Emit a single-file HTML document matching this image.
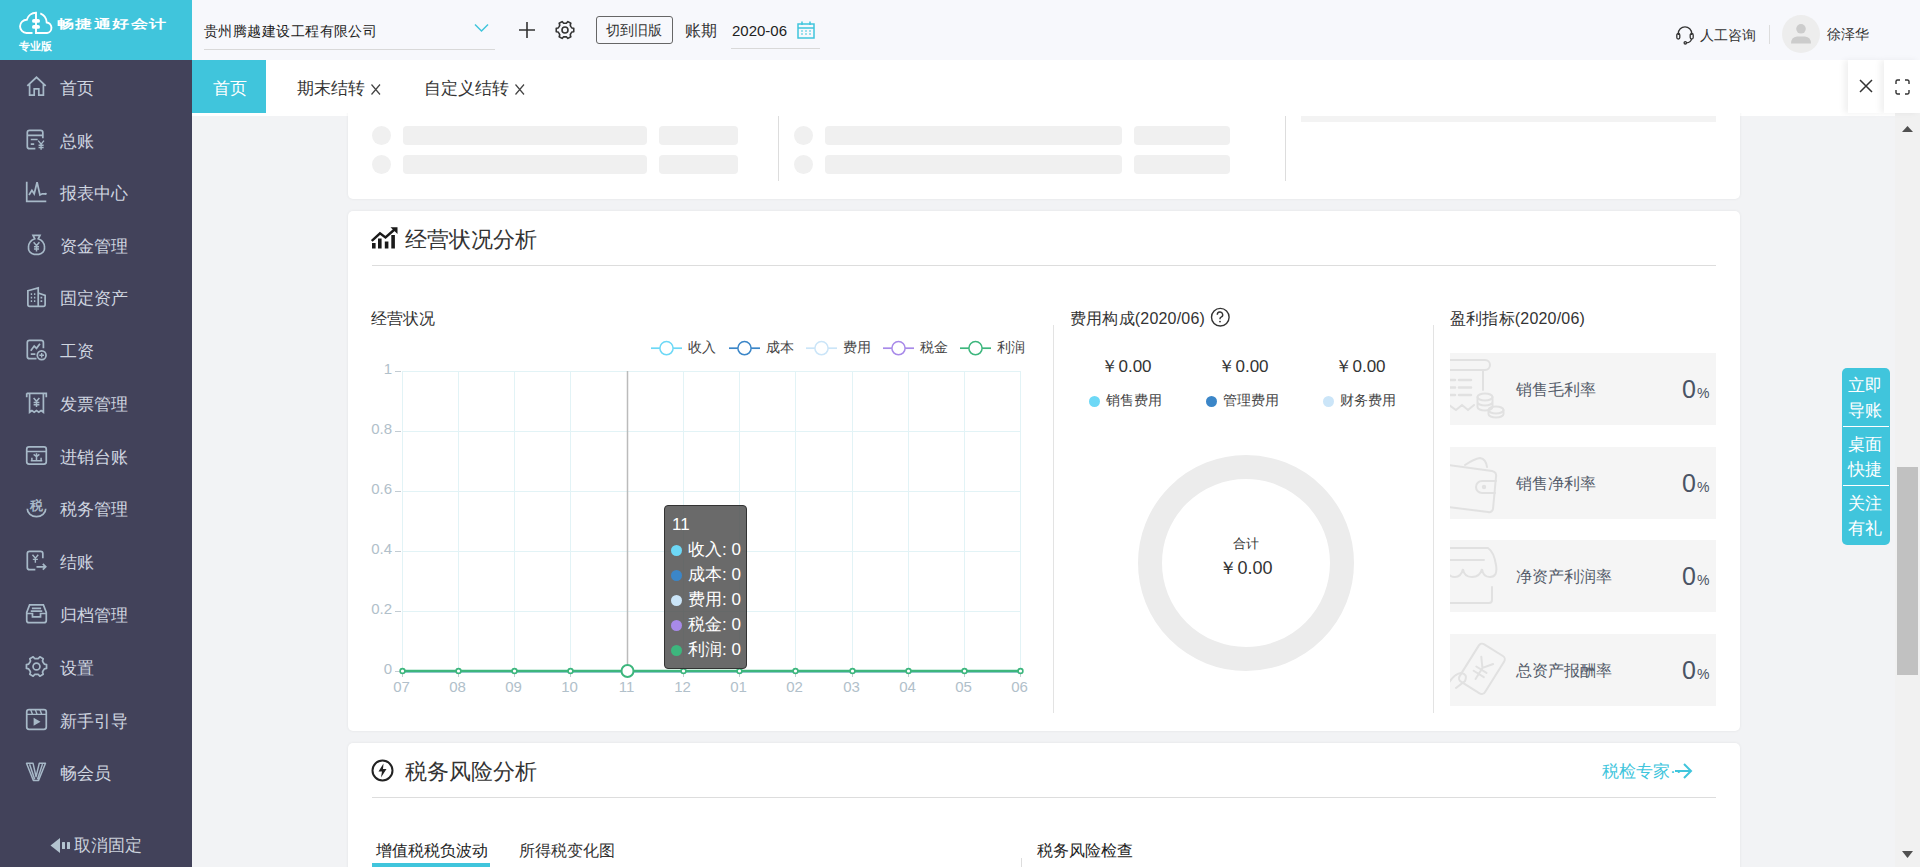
<!DOCTYPE html>
<html><head><meta charset="utf-8">
<style>
*{box-sizing:border-box;margin:0;padding:0}
html,body{width:1920px;height:867px;overflow:hidden;font-family:"Liberation Sans",sans-serif;background:#f2f3f5;color:#333}
.abs{position:absolute}
.t{position:absolute;white-space:nowrap;line-height:1}
#side{position:absolute;left:0;top:0;width:192px;height:867px;background:#42425a;z-index:5}
#logo{position:absolute;left:0;top:0;width:192px;height:60px;background:#40c5dc}
#hdr{position:absolute;left:192px;top:0;width:1728px;height:60px;background:#f7f8fc;z-index:5}
#tabs{position:absolute;left:192px;top:60px;width:1728px;height:53px;background:#fff;z-index:5}
#main{position:absolute;left:0;top:0;width:1920px;height:867px;overflow:hidden}
.menu{position:absolute;left:0;width:192px;height:52px}
.menu .tx{position:absolute;left:60px;top:19px;line-height:1;font-size:17px;color:#d0d6e0;white-space:nowrap}
.menu svg{position:absolute;left:25px;top:14px;width:23px;height:23px}
.card{position:absolute;left:156px;width:1392px;background:#fff;border-radius:5px;box-shadow:0 0 3px rgba(0,0,0,.07)}
.sk{position:absolute;background:#f0f0f0;border-radius:4px;height:19px}
.skc{position:absolute;background:#f0f0f0;border-radius:50%;width:19px;height:19px}
</style></head><body>
<div id="side">
  <div id="logo">
    <svg class="abs" style="left:0;top:0" width="60" height="40" viewBox="0 0 60 40" fill="none" stroke="#fff" stroke-width="1.9">
      <path d="M32.5 33 H26.5 A6.6 6.6 0 0 1 26.8 19.8 A9.7 9.7 0 0 1 36 12.8 V33 H47 A5.3 5.3 0 0 0 46.7 22.5 A10.4 10.4 0 0 0 40.3 13.3"/>
      <rect x="32" y="19" width="8" height="3.8" rx="1.9" fill="#fff" stroke="none"/>
      <rect x="32" y="25" width="8" height="3.8" rx="1.9" fill="#fff" stroke="none"/>
    </svg>
    <div class="t" style="left:57px;top:18px;font-size:12px;font-weight:bold;color:#fff;letter-spacing:1px;transform:scaleX(1.42);transform-origin:0 0">畅捷通好会计</div>
    <div class="t" style="left:19px;top:41px;font-size:11px;font-weight:bold;color:#fff">专业版</div>
  </div>
<div class="menu" style="top:61px"><svg width="20" height="20" viewBox="0 0 20 20" stroke="#a7b9c8" stroke-width="1.5"><path d="M2 9.5 L10 2 L18 9.5 M4 8 V17.5 H8 V12 H12 V17.5 H16 V8" fill="none"/></svg><div class="tx">首页</div></div>
<div class="menu" style="top:114px"><svg width="20" height="20" viewBox="0 0 20 20" stroke="#a7b9c8" stroke-width="1.5"><path d="M15.5 9 V4 A2 2 0 0 0 13.5 2 H4 A2 2 0 0 0 2 4 V16 A2 2 0 0 0 4 18 H9" fill="none"/><path d="M2 6.5 H15.5 M5 10 H11 M5 14 H8" fill="none"/><path d="M11.5 11 L14 14 L16.5 11 M14 14 V19 M11.8 15 H16.2 M11.8 17 H16.2" fill="none" stroke-width="1.2"/></svg><div class="tx">总账</div></div>
<div class="menu" style="top:166px"><svg width="20" height="20" viewBox="0 0 20 20" stroke="#a7b9c8" stroke-width="1.5"><path d="M1.5 1.5 V18.5 H18.5" fill="none"/><path d="M3.5 13 L6 9 L8 12 L10.5 2 L13 13 L15 12 H18" fill="none"/><circle cx="18" cy="12" r="1" fill="#a7b9c8" stroke="none"/></svg><div class="tx">报表中心</div></div>
<div class="menu" style="top:219px"><svg width="20" height="20" viewBox="0 0 20 20" stroke="#a7b9c8" stroke-width="1.5"><path d="M7 2 H13 L11.5 5 A8 8 0 0 1 17 12.5 A5.5 5.5 0 0 1 12 18.5 H8 A5.5 5.5 0 0 1 3 12.5 A8 8 0 0 1 8.5 5 Z" fill="none"/><path d="M7.5 8 L10 11 L12.5 8 M10 11 V16 M7.8 12 H12.2 M7.8 14 H12.2" fill="none" stroke-width="1.3"/></svg><div class="tx">资金管理</div></div>
<div class="menu" style="top:271px"><svg width="20" height="20" viewBox="0 0 20 20" stroke="#a7b9c8" stroke-width="1.5"><path d="M2.5 5 L11.5 2.5 V18.5 H4 A1.5 1.5 0 0 1 2.5 17 Z M11.5 7 L17.5 9 V17 A1.5 1.5 0 0 1 16 18.5 H11.5" fill="none"/><path d="M5 8 H6.2 M7.8 8 H9 M5 11 H6.2 M7.8 11 H9 M5 14 H6.2 M7.8 14 H9 M13.5 11 H15 M13.5 14 H15" fill="none"/></svg><div class="tx">固定资产</div></div>
<div class="menu" style="top:324px"><svg width="20" height="20" viewBox="0 0 20 20" stroke="#a7b9c8" stroke-width="1.5"><path d="M16 9 V4 A2 2 0 0 0 14 2 H4 A2 2 0 0 0 2 4 V16 A2 2 0 0 0 4 18 H10" fill="none"/><path d="M5 11 L8 7 L10 9 L13 5 M5 14 H9" fill="none"/><circle cx="14.5" cy="15" r="3.8" fill="none"/><path d="M14.5 13 V17 M12.5 15 H16.5" fill="none" stroke-width="1.2"/></svg><div class="tx">工资</div></div>
<div class="menu" style="top:377px"><svg width="20" height="20" viewBox="0 0 20 20" stroke="#a7b9c8" stroke-width="1.5"><path d="M1.5 2 H18.5 V5.5 M1.5 2 V5.5 M4 2 V18.5 L6 17 L8 18.5 L10 17 L12 18.5 L14 17 L16 18.5 V2" fill="none"/><path d="M7.5 6 L10 9 L12.5 6 M10 9 V14 M7.5 10 H12.5 M7.5 12 H12.5" fill="none" stroke-width="1.3"/></svg><div class="tx">发票管理</div></div>
<div class="menu" style="top:430px"><svg width="20" height="20" viewBox="0 0 20 20" stroke="#a7b9c8" stroke-width="1.5"><rect x="1.5" y="2.5" width="17" height="15" rx="2" fill="none"/><path d="M1.5 6.5 H18.5 M5 14.5 H15 M10 8 V14.5 M7.5 9 L10 11 L12.5 9 M6 12 V14.5 M14 12 V14.5" fill="none" stroke-width="1.3"/></svg><div class="tx">进销台账</div></div>
<div class="menu" style="top:482px"><svg width="20" height="20" viewBox="0 0 20 20" stroke="#a7b9c8" stroke-width="1.5"><path d="M2 11 A8 7 0 0 0 18 11" fill="none"/><text x="10" y="12" font-size="11" font-weight="bold" text-anchor="middle" fill="#a7b9c8" stroke="none">税</text></svg><div class="tx">税务管理</div></div>
<div class="menu" style="top:535px"><svg width="20" height="20" viewBox="0 0 20 20" stroke="#a7b9c8" stroke-width="1.5"><path d="M15.5 8 V4 A2 2 0 0 0 13.5 2 H4 A2 2 0 0 0 2 4 V16 A2 2 0 0 0 4 18 H9" fill="none"/><path d="M6.5 5 L9 8 L11.5 5 M9 8 V12 M6.8 9 H11.2" fill="none" stroke-width="1.2"/><path d="M10 15.5 H18 M15.5 13 L18 15.5 L15.5 18" fill="none"/></svg><div class="tx">结账</div></div>
<div class="menu" style="top:588px"><svg width="20" height="20" viewBox="0 0 20 20" stroke="#a7b9c8" stroke-width="1.5"><path d="M4 2.5 H16 L18.5 9 V16 A2 2 0 0 1 16.5 18 H3.5 A2 2 0 0 1 1.5 16 V9 Z M1.5 10 H6.5 V13 H13.5 V10 H18.5 M6 5.5 H14 M5 8 H15" fill="none"/></svg><div class="tx">归档管理</div></div>
<div class="menu" style="top:641px"><svg width="20" height="20" viewBox="0 0 20 20" stroke="#a7b9c8" stroke-width="1.5"><path d="M15.89 6.60 L16.79 7.92 L18.74 8.30 L18.74 11.70 L16.79 12.08 L15.89 13.40 L15.19 14.84 L15.84 16.72 L12.90 18.42 L11.60 16.92 L10.00 16.80 L8.40 16.92 L7.10 18.42 L4.16 16.72 L4.81 14.84 L4.11 13.40 L3.21 12.08 L1.26 11.70 L1.26 8.30 L3.21 7.92 L4.11 6.60 L4.81 5.16 L4.16 3.28 L7.10 1.58 L8.40 3.08 L10.00 3.20 L11.60 3.08 L12.90 1.58 L15.84 3.28 L15.19 5.16 Z" fill="none" stroke-linejoin="round"/><circle cx="10" cy="10" r="3" fill="none"/></svg><div class="tx">设置</div></div>
<div class="menu" style="top:694px"><svg width="20" height="20" viewBox="0 0 20 20" stroke="#a7b9c8" stroke-width="1.5"><rect x="1.5" y="1.5" width="17" height="17" rx="2" fill="none"/><path d="M1.5 5.5 H18.5 M5 1.5 L6.5 5.5 M9 1.5 L10.5 5.5 M13 1.5 L14.5 5.5" fill="none" stroke-width="1.2"/><path d="M7.5 8.5 V15.5 L13.5 12 Z" fill="#a7b9c8" stroke="none"/></svg><div class="tx">新手引导</div></div>
<div class="menu" style="top:746px"><svg width="20" height="20" viewBox="0 0 20 20" stroke="#a7b9c8" stroke-width="1.5"><path d="M1.3 2.9 H7 L9.6 14.5 L12.4 2.9 H17.8 L11.8 17.9 H7.3 Z M4 3.6 L8.4 16.8 M15.2 3.6 L10.9 16.8" fill="none" stroke-linejoin="round" stroke-width="1.3"/></svg><div class="tx">畅会员</div></div>

  <svg class="abs" style="left:50px;top:837px" width="22" height="17" viewBox="0 0 22 17">
    <path d="M0.5 8.5 L10 1 V16 Z" fill="#b4c4d0"/><rect x="12" y="5" width="3" height="7" rx="0.5" fill="#b4c4d0"/><rect x="17" y="5" width="3" height="7" rx="0.5" fill="#b4c4d0"/>
  </svg>
  <div class="t" style="left:74px;top:837px;font-size:17px;color:#cdd3dd">取消固定</div>
</div>

<div id="hdr">
  <div class="t" style="left:12px;top:23.5px;font-size:14px;color:#1a1a1a;letter-spacing:0.45px">贵州腾越建设工程有限公司</div>
  <div class="abs" style="left:12px;top:49px;width:291px;height:1px;background:#d9d9d9"></div>
  <svg class="abs" style="left:282px;top:23px" width="15" height="10" viewBox="0 0 15 10"><path d="M1 1.5 L7.5 8 L14 1.5" fill="none" stroke="#40c5dc" stroke-width="1.5"/></svg>
  <svg class="abs" style="left:327px;top:22px" width="16" height="16" viewBox="0 0 16 16"><path d="M8 0 V16 M0 8 H16" stroke="#333" stroke-width="1.6"/></svg>
  <svg class="abs" style="left:363px;top:20px" width="20" height="20" viewBox="0 0 20 20" stroke="#333" stroke-width="1.6"><path d="M15.89 6.60 L16.79 7.92 L18.74 8.30 L18.74 11.70 L16.79 12.08 L15.89 13.40 L15.19 14.84 L15.84 16.72 L12.90 18.42 L11.60 16.92 L10.00 16.80 L8.40 16.92 L7.10 18.42 L4.16 16.72 L4.81 14.84 L4.11 13.40 L3.21 12.08 L1.26 11.70 L1.26 8.30 L3.21 7.92 L4.11 6.60 L4.81 5.16 L4.16 3.28 L7.10 1.58 L8.40 3.08 L10.00 3.20 L11.60 3.08 L12.90 1.58 L15.84 3.28 L15.19 5.16 Z" fill="none" stroke-linejoin="round"/><circle cx="10" cy="10" r="3" fill="none"/></svg>
  <div class="abs" style="left:404px;top:16px;width:77px;height:28px;border:1px solid #666;border-radius:3px"></div>
  <div class="t" style="left:414px;top:23px;font-size:14px;color:#333">切到旧版</div>
  <div class="t" style="left:493px;top:23px;font-size:16px;color:#333">账期</div>
  <div class="t" style="left:540px;top:23px;font-size:15px;color:#222">2020-06</div>
  <svg class="abs" style="left:605px;top:21px" width="18" height="18" viewBox="0 0 18 18" fill="none" stroke="#40c5dc" stroke-width="1.5"><rect x="1" y="3" width="16" height="14"/><path d="M1 7 H17 M5 0.5 V4 M13 0.5 V4"/><path d="M4 10 H6 M8 10 H10 M12 10 H14 M4 13 H6 M8 13 H10 M12 13 H14" stroke-width="1.2"/></svg>
  <div class="abs" style="left:539px;top:48px;width:89px;height:1px;background:#d9d9d9"></div>

  <svg class="abs" style="left:1484px;top:25px" width="18" height="20" viewBox="0 0 18 20" fill="none" stroke="#333" stroke-width="1.3"><path d="M2.3 10 V8.5 A6.7 6.7 0 0 1 15.7 8.5 V10"/><rect x="0.8" y="8.5" width="3" height="5.5" rx="1.5"/><rect x="14.2" y="8.5" width="3" height="5.5" rx="1.5"/><path d="M15.5 14 Q15 17.5 10.5 17.8"/><circle cx="9.3" cy="17.8" r="1.2"/></svg>
  <div class="t" style="left:1508px;top:28px;font-size:14px;color:#333">人工咨询</div>
  <div class="abs" style="left:1577px;top:25px;width:1px;height:19px;background:#ddd"></div>
  <div class="abs" style="left:1590px;top:15px;width:38px;height:38px;border-radius:50%;background:#ededed"></div>
  <svg class="abs" style="left:1598px;top:23px" width="22" height="21" viewBox="0 0 22 21"><circle cx="11" cy="5.8" r="4.8" fill="#ccc"/><path d="M1 20.6 Q1 14 7 13.4 H15 Q21 14 21 20.6 Z" fill="#ccc"/></svg>
  <div class="t" style="left:1635px;top:27px;font-size:14px;color:#333">徐泽华</div>
</div>

<div id="tabs">
  <div class="abs" style="left:0;top:0;width:74px;height:53px;background:#40c5dc"></div>
  <div class="t" style="left:21px;top:20px;font-size:17px;color:#fff">首页</div>
  <div class="t" style="left:105px;top:20px;font-size:17px;color:#333">期末结转</div>
  <svg class="abs" style="left:179px;top:24px" width="10" height="11" viewBox="0 0 10 11"><path d="M0.5 0.5 L9 10.5 M9 0.5 L0.5 10.5" stroke="#444" stroke-width="1.2"/></svg>
  <div class="t" style="left:232px;top:20px;font-size:17px;color:#333">自定义结转</div>
  <svg class="abs" style="left:323px;top:24px" width="10" height="11" viewBox="0 0 10 11"><path d="M0.5 0.5 L9 10.5 M9 0.5 L0.5 10.5" stroke="#444" stroke-width="1.2"/></svg>
  <div class="abs" style="left:1656px;top:0;width:36px;height:53px;background:#fff;box-shadow:-4px 0 6px rgba(0,0,0,.06)"></div>
  <svg class="abs" style="left:1667px;top:19px" width="14" height="14" viewBox="0 0 14 14"><path d="M1 1 L13 13 M13 1 L1 13" stroke="#333" stroke-width="1.5"/></svg>
  <div class="abs" style="left:1692px;top:0;width:36px;height:53px;background:#fff;box-shadow:-4px 0 6px rgba(0,0,0,.06)"></div>
  <svg class="abs" style="left:1703px;top:19px" width="15" height="16" viewBox="0 0 15 16" fill="none" stroke="#333" stroke-width="1.4"><path d="M1 5 V2.5 A1.5 1.5 0 0 1 2.5 1 H5 M10 1 H12.5 A1.5 1.5 0 0 1 14 2.5 V5 M14 11 V13.5 A1.5 1.5 0 0 1 12.5 15 H10 M5 15 H2.5 A1.5 1.5 0 0 1 1 13.5 V11"/></svg>
</div>

<div id="main">
<div class="abs" style="left:192px;top:113px;width:1703px;height:3px;background:#fff"></div>
<div class="card" style="left:348px;top:60px;height:139px"></div>
<div class="card" style="left:348px;top:211px;height:520px"></div>
<div class="card" style="left:348px;top:743px;height:300px"></div>
<div class="skc" style="left:372px;top:126px"></div>
<div class="sk" style="left:403px;top:126px;width:244px"></div>
<div class="sk" style="left:659px;top:126px;width:79px"></div>
<div class="skc" style="left:794px;top:126px"></div>
<div class="sk" style="left:825px;top:126px;width:297px"></div>
<div class="sk" style="left:1134px;top:126px;width:96px"></div>
<div class="skc" style="left:372px;top:155px"></div>
<div class="sk" style="left:403px;top:155px;width:244px"></div>
<div class="sk" style="left:659px;top:155px;width:79px"></div>
<div class="skc" style="left:794px;top:155px"></div>
<div class="sk" style="left:825px;top:155px;width:297px"></div>
<div class="sk" style="left:1134px;top:155px;width:96px"></div>
<div class="abs" style="left:778px;top:116px;width:1px;height:65px;background:#ddd"></div>
<div class="abs" style="left:1285px;top:116px;width:1px;height:65px;background:#ddd"></div>
<div class="abs" style="left:1301px;top:116px;width:415px;height:6px;background:#f3f3f3"></div>
<svg class="abs" style="left:371px;top:226px" width="27" height="24" viewBox="0 0 27 24">
<rect x="1" y="17" width="3.6" height="5.5" fill="#1a1a1a"/><rect x="7" y="12.5" width="3.6" height="10" fill="#1a1a1a"/><rect x="13.8" y="15.5" width="3.6" height="7" fill="#1a1a1a"/><rect x="20.3" y="9" width="3.6" height="13.5" fill="#1a1a1a"/>
<path d="M0.8 15 L9 7.3 L14.5 11.5 L23.5 3.5" fill="none" stroke="#1a1a1a" stroke-width="2.4"/>
<path d="M19.5 1.2 H26.5 V8 Z" fill="#1a1a1a"/></svg>
<div class="t" style="left:405px;top:229px;font-size:22px;color:#333">经营状况分析</div>
<div class="abs" style="left:372px;top:265px;width:1344px;height:1px;background:#ddd"></div>
<div class="t" style="left:371px;top:311px;font-size:16px;color:#333">经营状况</div>
<div class="t" style="left:688px;top:340px;font-size:14px;color:#444">收入</div>
<div class="t" style="left:766px;top:340px;font-size:14px;color:#444">成本</div>
<div class="t" style="left:843px;top:340px;font-size:14px;color:#444">费用</div>
<div class="t" style="left:920px;top:340px;font-size:14px;color:#444">税金</div>
<div class="t" style="left:997px;top:340px;font-size:14px;color:#444">利润</div>
<svg class="abs" style="left:0;top:0" width="1920" height="867" viewBox="0 0 1920 867">
<path d="M651 348.2 H682" stroke="#6dd8f6" stroke-width="1.7"/><circle cx="666.5" cy="348.2" r="6.6" fill="#fff" stroke="#6dd8f6" stroke-width="1.5"/>
<path d="M729 348.2 H760" stroke="#3b86c8" stroke-width="1.7"/><circle cx="744.5" cy="348.2" r="6.6" fill="#fff" stroke="#3b86c8" stroke-width="1.5"/>
<path d="M806 348.2 H837" stroke="#cbe5f8" stroke-width="1.7"/><circle cx="821.5" cy="348.2" r="6.6" fill="#fff" stroke="#cbe5f8" stroke-width="1.5"/>
<path d="M883 348.2 H914" stroke="#a88ae9" stroke-width="1.7"/><circle cx="898.5" cy="348.2" r="6.6" fill="#fff" stroke="#a88ae9" stroke-width="1.5"/>
<path d="M960 348.2 H991" stroke="#3db67d" stroke-width="1.7"/><circle cx="975.5" cy="348.2" r="6.6" fill="#fff" stroke="#3db67d" stroke-width="1.5"/>
<path d="M402.5 371.5 H1021" stroke="#e2f3f6" stroke-width="1"/>
<path d="M395 371.5 H401" stroke="#c3ccd2" stroke-width="1"/>
<path d="M402.5 431.5 H1021" stroke="#e2f3f6" stroke-width="1"/>
<path d="M395 431.5 H401" stroke="#c3ccd2" stroke-width="1"/>
<path d="M402.5 491.5 H1021" stroke="#e2f3f6" stroke-width="1"/>
<path d="M395 491.5 H401" stroke="#c3ccd2" stroke-width="1"/>
<path d="M402.5 551.5 H1021" stroke="#e2f3f6" stroke-width="1"/>
<path d="M395 551.5 H401" stroke="#c3ccd2" stroke-width="1"/>
<path d="M402.5 611.5 H1021" stroke="#e2f3f6" stroke-width="1"/>
<path d="M395 611.5 H401" stroke="#c3ccd2" stroke-width="1"/>
<path d="M402.5 671.5 H1021" stroke="#e2f3f6" stroke-width="1"/>
<path d="M395 671.5 H401" stroke="#c3ccd2" stroke-width="1"/>
<path d="M402.5 371 V671" stroke="#e2f3f6" stroke-width="1"/>
<path d="M402.5 671 V677" stroke="#c3ccd2" stroke-width="1"/>
<path d="M458.5 371 V671" stroke="#e2f3f6" stroke-width="1"/>
<path d="M458.5 671 V677" stroke="#c3ccd2" stroke-width="1"/>
<path d="M514.5 371 V671" stroke="#e2f3f6" stroke-width="1"/>
<path d="M514.5 671 V677" stroke="#c3ccd2" stroke-width="1"/>
<path d="M570.5 371 V671" stroke="#e2f3f6" stroke-width="1"/>
<path d="M570.5 671 V677" stroke="#c3ccd2" stroke-width="1"/>
<path d="M627.5 371 V671" stroke="#e2f3f6" stroke-width="1"/>
<path d="M627.5 671 V677" stroke="#c3ccd2" stroke-width="1"/>
<path d="M683.5 371 V671" stroke="#e2f3f6" stroke-width="1"/>
<path d="M683.5 671 V677" stroke="#c3ccd2" stroke-width="1"/>
<path d="M739.5 371 V671" stroke="#e2f3f6" stroke-width="1"/>
<path d="M739.5 671 V677" stroke="#c3ccd2" stroke-width="1"/>
<path d="M795.5 371 V671" stroke="#e2f3f6" stroke-width="1"/>
<path d="M795.5 671 V677" stroke="#c3ccd2" stroke-width="1"/>
<path d="M852.5 371 V671" stroke="#e2f3f6" stroke-width="1"/>
<path d="M852.5 671 V677" stroke="#c3ccd2" stroke-width="1"/>
<path d="M908.5 371 V671" stroke="#e2f3f6" stroke-width="1"/>
<path d="M908.5 671 V677" stroke="#c3ccd2" stroke-width="1"/>
<path d="M964.5 371 V671" stroke="#e2f3f6" stroke-width="1"/>
<path d="M964.5 671 V677" stroke="#c3ccd2" stroke-width="1"/>
<path d="M1020.5 371 V671" stroke="#e2f3f6" stroke-width="1"/>
<path d="M1020.5 671 V677" stroke="#c3ccd2" stroke-width="1"/>
<path d="M627.5 371 V671" stroke="#bbb" stroke-width="1.5"/>
<path d="M402.5 671.3 H1021" stroke="#5a9ccf" stroke-width="2.6"/>
<path d="M402.5 671 H1021" stroke="#3db67d" stroke-width="2.6"/>
<circle cx="402.5" cy="671" r="2.4" fill="#fff" stroke="#3db67d" stroke-width="1.6"/>
<circle cx="458.5" cy="671" r="2.4" fill="#fff" stroke="#3db67d" stroke-width="1.6"/>
<circle cx="514.5" cy="671" r="2.4" fill="#fff" stroke="#3db67d" stroke-width="1.6"/>
<circle cx="570.5" cy="671" r="2.4" fill="#fff" stroke="#3db67d" stroke-width="1.6"/>
<circle cx="627.5" cy="671" r="6" fill="#fff" stroke="#3db67d" stroke-width="2"/>
<circle cx="683.5" cy="671" r="2.4" fill="#fff" stroke="#3db67d" stroke-width="1.6"/>
<circle cx="739.5" cy="671" r="2.4" fill="#fff" stroke="#3db67d" stroke-width="1.6"/>
<circle cx="795.5" cy="671" r="2.4" fill="#fff" stroke="#3db67d" stroke-width="1.6"/>
<circle cx="852.5" cy="671" r="2.4" fill="#fff" stroke="#3db67d" stroke-width="1.6"/>
<circle cx="908.5" cy="671" r="2.4" fill="#fff" stroke="#3db67d" stroke-width="1.6"/>
<circle cx="964.5" cy="671" r="2.4" fill="#fff" stroke="#3db67d" stroke-width="1.6"/>
<circle cx="1020.5" cy="671" r="2.4" fill="#fff" stroke="#3db67d" stroke-width="1.6"/>
</svg>
<div class="t" style="right:1528px;top:361px;font-size:15px;color:#b1c0ca">1</div>
<div class="t" style="right:1528px;top:421px;font-size:15px;color:#b1c0ca">0.8</div>
<div class="t" style="right:1528px;top:481px;font-size:15px;color:#b1c0ca">0.6</div>
<div class="t" style="right:1528px;top:541px;font-size:15px;color:#b1c0ca">0.4</div>
<div class="t" style="right:1528px;top:601px;font-size:15px;color:#b1c0ca">0.2</div>
<div class="t" style="right:1528px;top:661px;font-size:15px;color:#b1c0ca">0</div>
<div class="t" style="left:381.50px;width:40px;text-align:center;top:679px;font-size:15px;color:#b1c0ca">07</div>
<div class="t" style="left:437.50px;width:40px;text-align:center;top:679px;font-size:15px;color:#b1c0ca">08</div>
<div class="t" style="left:493.50px;width:40px;text-align:center;top:679px;font-size:15px;color:#b1c0ca">09</div>
<div class="t" style="left:549.50px;width:40px;text-align:center;top:679px;font-size:15px;color:#b1c0ca">10</div>
<div class="t" style="left:606.50px;width:40px;text-align:center;top:679px;font-size:15px;color:#b1c0ca">11</div>
<div class="t" style="left:662.50px;width:40px;text-align:center;top:679px;font-size:15px;color:#b1c0ca">12</div>
<div class="t" style="left:718.50px;width:40px;text-align:center;top:679px;font-size:15px;color:#b1c0ca">01</div>
<div class="t" style="left:774.50px;width:40px;text-align:center;top:679px;font-size:15px;color:#b1c0ca">02</div>
<div class="t" style="left:831.50px;width:40px;text-align:center;top:679px;font-size:15px;color:#b1c0ca">03</div>
<div class="t" style="left:887.50px;width:40px;text-align:center;top:679px;font-size:15px;color:#b1c0ca">04</div>
<div class="t" style="left:943.50px;width:40px;text-align:center;top:679px;font-size:15px;color:#b1c0ca">05</div>
<div class="t" style="left:999.50px;width:40px;text-align:center;top:679px;font-size:15px;color:#b1c0ca">06</div>
<div class="abs" style="left:664px;top:505px;width:83px;height:164px;background:rgba(80,80,80,.85);border:1px solid #333;border-radius:4px"></div>
<div class="t" style="left:672px;top:516px;font-size:17px;color:#fff">11</div>
<div class="abs" style="left:671px;top:544.5px;width:11px;height:11px;border-radius:50%;background:#6dd8f6"></div>
<div class="t" style="left:688px;top:541px;font-size:17px;color:#fff">收入: 0</div>
<div class="abs" style="left:671px;top:569.5px;width:11px;height:11px;border-radius:50%;background:#3b86c8"></div>
<div class="t" style="left:688px;top:566px;font-size:17px;color:#fff">成本: 0</div>
<div class="abs" style="left:671px;top:594.5px;width:11px;height:11px;border-radius:50%;background:#cbe5f8"></div>
<div class="t" style="left:688px;top:591px;font-size:17px;color:#fff">费用: 0</div>
<div class="abs" style="left:671px;top:619.5px;width:11px;height:11px;border-radius:50%;background:#a88ae9"></div>
<div class="t" style="left:688px;top:616px;font-size:17px;color:#fff">税金: 0</div>
<div class="abs" style="left:671px;top:644.5px;width:11px;height:11px;border-radius:50%;background:#3db67d"></div>
<div class="t" style="left:688px;top:641px;font-size:17px;color:#fff">利润: 0</div>
<div class="t" style="left:1070px;top:311px;font-size:16px;color:#333;letter-spacing:0.2px">费用构成(2020/06)</div>
<svg class="abs" style="left:1210px;top:307px" width="20" height="20" viewBox="0 0 20 20"><circle cx="10.3" cy="10.2" r="8.8" fill="none" stroke="#333" stroke-width="1.4"/><path d="M7.3 7.8 A2.7 2.7 0 1 1 10.8 10.3 Q10 10.7 10 11.8 V12.3" fill="none" stroke="#333" stroke-width="1.4"/><circle cx="10" cy="14.6" r="0.9" fill="#333"/></svg>
<div class="abs" style="left:1053px;top:325px;width:1px;height:388px;background:#e3e3e3"></div>
<div class="abs" style="left:1433px;top:325px;width:1px;height:388px;background:#e3e3e3"></div>
<div class="t" style="left:1076.5px;width:100px;text-align:center;top:358px;font-size:17px;color:#333">￥0.00</div>
<div class="abs" style="left:1088.5px;top:395.5px;width:11px;height:11px;border-radius:50%;background:#6dd8f6"></div>
<div class="t" style="left:1106px;top:393px;font-size:14px;color:#444">销售费用</div>
<div class="t" style="left:1193.5px;width:100px;text-align:center;top:358px;font-size:17px;color:#333">￥0.00</div>
<div class="abs" style="left:1205.5px;top:395.5px;width:11px;height:11px;border-radius:50%;background:#3b86c8"></div>
<div class="t" style="left:1223px;top:393px;font-size:14px;color:#444">管理费用</div>
<div class="t" style="left:1310.5px;width:100px;text-align:center;top:358px;font-size:17px;color:#333">￥0.00</div>
<div class="abs" style="left:1322.5px;top:395.5px;width:11px;height:11px;border-radius:50%;background:#cbe5f8"></div>
<div class="t" style="left:1340px;top:393px;font-size:14px;color:#444">财务费用</div>
<div class="abs" style="left:1138px;top:455px;width:216px;height:216px;border-radius:50%;border:24px solid #ececec"></div>
<div class="t" style="left:1196px;width:100px;text-align:center;top:537px;font-size:13px;color:#333">合计</div>
<div class="t" style="left:1196px;width:100px;text-align:center;top:559px;font-size:18px;color:#333">￥0.00</div>
<div class="t" style="left:1450px;top:311px;font-size:16px;color:#333;letter-spacing:0.2px">盈利指标(2020/06)</div>
<div class="abs" style="left:1450px;top:353px;width:266px;height:72px;background:#f5f5f5;overflow:hidden"><svg width="70" height="72" viewBox="0 0 70 72" fill="none" stroke="#e1e1e1" stroke-width="2" stroke-linecap="round"><path d="M-2 7 H35 A5 5 0 0 1 35 17 H-2 M33 17 V37"/><path d="M-2 27 H5 M9 27 H21 M-2 34.5 H5 M9 34.5 H21 M-2 42 H5 M9 42 H21" stroke-width="2.5"/><path d="M-1 52 L6 57 L12 52 L18 57 L24 52"/><ellipse cx="35" cy="44" rx="7.5" ry="3.5"/><path d="M27.5 44 V54 A7.5 3.5 0 0 0 42.5 54 V44 M27.5 49 A7.5 3.5 0 0 0 42.5 49"/><ellipse cx="46" cy="57" rx="7.5" ry="3.5"/><path d="M38.5 57 V61 A7.5 3.5 0 0 0 53.5 61 V57"/></svg></div>
<div class="t" style="left:1516px;top:382px;font-size:16px;color:#555d6b">销售毛利率</div>
<div class="t" style="left:1682px;top:377px;font-size:25px;color:#4a5364">0<span style="font-size:14px;margin-left:1px">%</span></div>
<div class="abs" style="left:1450px;top:447px;width:266px;height:72px;background:#f5f5f5;overflow:hidden"><svg width="70" height="72" viewBox="0 0 70 72" fill="none" stroke="#e1e1e1" stroke-width="2" stroke-linecap="round"><path d="M-2 18 L42 24 Q47 25 46 30 L43 62 Q42 66 38 65 L-2 60"/><path d="M46 34 H32 A6 6 0 0 0 32 46 H45"/><circle cx="34" cy="40" r="1.2" fill="#e1e1e1"/><path d="M15 18 Q24 12 30 11 Q36 12 37 20"/></svg></div>
<div class="t" style="left:1516px;top:476px;font-size:16px;color:#555d6b">销售净利率</div>
<div class="t" style="left:1682px;top:471px;font-size:25px;color:#4a5364">0<span style="font-size:14px;margin-left:1px">%</span></div>
<div class="abs" style="left:1450px;top:540px;width:266px;height:72px;background:#f5f5f5;overflow:hidden"><svg width="70" height="72" viewBox="0 0 70 72" fill="none" stroke="#e1e1e1" stroke-width="2" stroke-linecap="round"><path d="M-2 8 H38 Q44 12 46 25 Q48 37 40 37 Q33 37 32 29 Q30 37 22 37 Q14 37 13 29 Q11 37 5 37 Q0 37 -2 33 M-2 20 H34"/><path d="M-2 63 H39 Q42 63 42 60 V47"/></svg></div>
<div class="t" style="left:1516px;top:569px;font-size:16px;color:#555d6b">净资产利润率</div>
<div class="t" style="left:1682px;top:564px;font-size:25px;color:#4a5364">0<span style="font-size:14px;margin-left:1px">%</span></div>
<div class="abs" style="left:1450px;top:634px;width:266px;height:72px;background:#f5f5f5;overflow:hidden"><svg width="70" height="72" viewBox="0 0 70 72" fill="none" stroke="#e1e1e1" stroke-width="2" stroke-linecap="round"><g transform="rotate(32 30 36)"><rect x="16" y="12" width="30" height="44" rx="4"/><path d="M24 24 L31 33 L38 24 M31 33 V46 M25 35 H37 M25 40 H37"/></g><path d="M-2 50 Q4 40 11 39 Q18 40 15 47 L6 54"/></svg></div>
<div class="t" style="left:1516px;top:663px;font-size:16px;color:#555d6b">总资产报酬率</div>
<div class="t" style="left:1682px;top:658px;font-size:25px;color:#4a5364">0<span style="font-size:14px;margin-left:1px">%</span></div>
<svg class="abs" style="left:371px;top:759px" width="23" height="23" viewBox="0 0 23 23"><circle cx="11.5" cy="11.5" r="10" fill="none" stroke="#222" stroke-width="2"/><path d="M12.5 4.5 L7.5 12.5 H11 L10 18.5 L15.5 10 H12 Z" fill="#222"/></svg>
<div class="t" style="left:405px;top:761px;font-size:22px;color:#333">税务风险分析</div>
<div class="t" style="left:1602px;top:763px;font-size:17px;color:#40c5dc">税检专家··</div>
<svg class="abs" style="left:1674px;top:762px" width="19" height="18" viewBox="0 0 19 18"><path d="M1 9 H17 M10 2 L17 9 L10 16" fill="none" stroke="#40c5dc" stroke-width="2"/></svg>
<div class="abs" style="left:372px;top:797px;width:1344px;height:1px;background:#ddd"></div>
<div class="t" style="left:376px;top:843px;font-size:16px;color:#222">增值税税负波动</div>
<div class="abs" style="left:372px;top:863px;width:118px;height:4px;background:#40c5dc"></div>
<div class="t" style="left:519px;top:843px;font-size:16px;color:#333">所得税变化图</div>
<div class="abs" style="left:1021px;top:858px;width:1px;height:10px;background:#ddd"></div>
<div class="t" style="left:1037px;top:843px;font-size:16px;color:#222">税务风险检查</div>
<div class="abs" style="left:1842px;top:368px;width:48px;height:177px;background:#40c5dc;border-radius:5px"></div>
<div class="abs" style="left:1843px;top:426px;width:46px;height:1px;background:#fff"></div>
<div class="abs" style="left:1843px;top:485px;width:46px;height:1px;background:#fff"></div>
<div class="t" style="left:1848px;top:377px;font-size:17px;color:#fff">立即</div>
<div class="t" style="left:1848px;top:402px;font-size:17px;color:#fff">导账</div>
<div class="t" style="left:1848px;top:436px;font-size:17px;color:#fff">桌面</div>
<div class="t" style="left:1848px;top:461px;font-size:17px;color:#fff">快捷</div>
<div class="t" style="left:1848px;top:495px;font-size:17px;color:#fff">关注</div>
<div class="t" style="left:1848px;top:520px;font-size:17px;color:#fff">有礼</div>
<div class="abs" style="left:1895px;top:113px;width:25px;height:754px;background:#f1f1f1"></div>
<div class="abs" style="left:1897px;top:467px;width:21px;height:208px;background:#c1c1c1"></div>
<svg class="abs" style="left:1902px;top:126px" width="11" height="6" viewBox="0 0 11 6"><path d="M5.5 0 L11 6 H0 Z" fill="#505050"/></svg>
<svg class="abs" style="left:1902px;top:851px" width="11" height="7" viewBox="0 0 11 7"><path d="M0 0 H11 L5.5 7 Z" fill="#505050"/></svg>

</div>
</body></html>
